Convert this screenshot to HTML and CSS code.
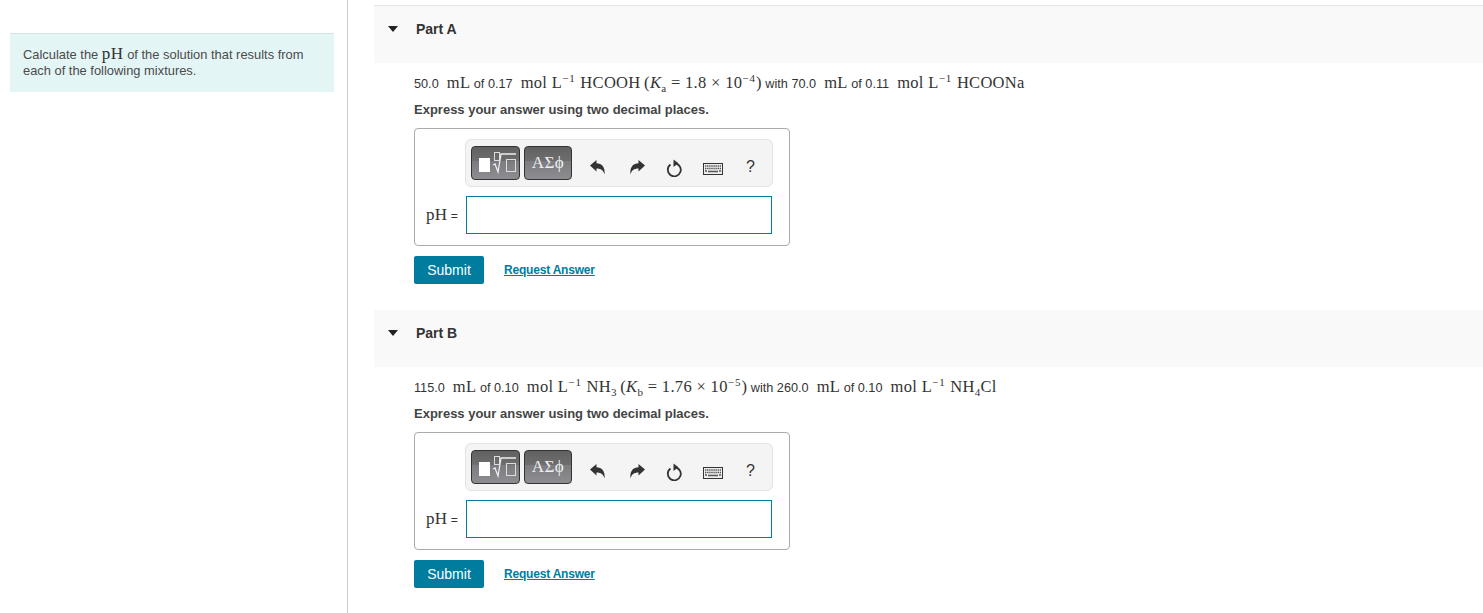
FILE: index.html
```html
<!DOCTYPE html>
<html lang="en">
<head>
    <meta charset="UTF-8">
    <title>Part A and Part B</title>
    <link rel="stylesheet" href="styles.css">
</head>
<body>
    <svg class="defs" width="0" height="0">
        <symbol id="undo" viewBox="0 0 16 16"><path d="M0 6.500 6.500 1V4.200C11.500 4.200 15.500 8 14.500 15.500 13.500 11.500 11 9.500 6.500 9.500V12.500Z"/></symbol>
        <symbol id="redo" viewBox="0 0 16 16"><path d="M16 6.500 9.500 1V4.200C4.500 4.200 .5 8 1.500 15.500 2.500 11.500 5 9.500 9.500 9.500V12.500Z"/></symbol>
        <symbol id="reset" viewBox="0 0 18 18"><path d="M5.500 5.500A6.500 6.500 0 1 0 9.500 4.300" fill="none" stroke="#333" stroke-width="1.800"/><path d="M8.500 .5 13.500 4.300 8.500 8Z"/></symbol>
        <symbol id="keys" viewBox="0 0 20 12"><rect x="0.500" y="0.500" width="19" height="11" fill="#eee" stroke="#333"/><path d="M2 3H18M2 5.500H18" stroke="#555" stroke-width="1.400" stroke-dasharray="1.400 .7"/><path d="M2 8H4M5 8.500H15M16 8H18" stroke="#555" stroke-width="1.400"/></symbol>
        <symbol id="templates" viewBox="0 0 46 32"><rect x="6" y="11" width="11" height="14" fill="#fff"/><g fill="none" stroke="#ddd"><rect x="21.500" y="5.500" width="5" height="8"/><path d="M20 18 22 17 25 25 28 7H43" stroke="#eee" stroke-width="1.300"/><rect x="33.500" y="12.500" width="9" height="12"/></g></symbol>
    </svg>

    <div class="page">
        <aside class="intro-col">
            <div class="intro">
                Calculate the <span class="m big">pH</span> of the solution that results from each of the following mixtures.
            </div>
        </aside>

        <main class="parts">
            <section class="part">
                <div class="part-head"><span class="caret"></span><span class="part-name">Part A</span></div>
                <div class="part-body">
                    <p class="question">50.0 <span class="m">&nbsp;mL</span> of 0.17 <span class="m">&nbsp;mol L<sup>&minus;1</sup> HCOOH</span> <span class="m">(<i>K</i><sub>a</sub> = 1.8 &times; 10<sup>&minus;4</sup>)</span> with 70.0 <span class="m">&nbsp;mL</span> of 0.11 <span class="m">&nbsp;mol L<sup>&minus;1</sup> HCOONa</span></p>
                    <p class="hint">Express your answer using two decimal places.</p>
                    <div class="answer">
                        <div class="toolbar">
                            <button class="tool tool-tpl"><svg width="46" height="32"><use href="#templates"/></svg></button>
                            <button class="tool tool-sym">ΑΣϕ</button>
                            <svg class="ico ico-undo" width="16" height="16"><use href="#undo"/></svg>
                            <svg class="ico ico-redo" width="16" height="16"><use href="#redo"/></svg>
                            <svg class="ico ico-reset" width="18" height="18"><use href="#reset"/></svg>
                            <svg class="ico ico-keys" width="20" height="12"><use href="#keys"/></svg>
                            <span class="help">?</span>
                        </div>
                        <div class="entry">
                            <label class="entry-label"><span class="m ph">pH</span> =</label>
                            <input class="entry-input" type="text">
                        </div>
                    </div>
                    <div class="actions">
                        <button class="submit">Submit</button>
                        <a class="request" href="#">Request Answer</a>
                    </div>
                </div>
            </section>

            <section class="part">
                <div class="part-head"><span class="caret"></span><span class="part-name">Part B</span></div>
                <div class="part-body">
                    <p class="question">115.0 <span class="m">&nbsp;mL</span> of 0.10 <span class="m">&nbsp;mol L<sup>&minus;1</sup> NH<sub>3</sub></span> <span class="m">(<i>K</i><sub>b</sub> = 1.76 &times; 10<sup>&minus;5</sup>)</span> with 260.0 <span class="m">&nbsp;mL</span> of 0.10 <span class="m">&nbsp;mol L<sup>&minus;1</sup> NH<sub>4</sub>Cl</span></p>
                    <p class="hint">Express your answer using two decimal places.</p>
                    <div class="answer">
                        <div class="toolbar">
                            <button class="tool tool-tpl"><svg width="46" height="32"><use href="#templates"/></svg></button>
                            <button class="tool tool-sym">ΑΣϕ</button>
                            <svg class="ico ico-undo" width="16" height="16"><use href="#undo"/></svg>
                            <svg class="ico ico-redo" width="16" height="16"><use href="#redo"/></svg>
                            <svg class="ico ico-reset" width="18" height="18"><use href="#reset"/></svg>
                            <svg class="ico ico-keys" width="20" height="12"><use href="#keys"/></svg>
                            <span class="help">?</span>
                        </div>
                        <div class="entry">
                            <label class="entry-label"><span class="m ph">pH</span> =</label>
                            <input class="entry-input" type="text">
                        </div>
                    </div>
                    <div class="actions">
                        <button class="submit">Submit</button>
                        <a class="request" href="#">Request Answer</a>
                    </div>
                </div>
            </section>
        </main>
    </div>
</body>
</html>
```

FILE: styles.css
```css
html, body {
    height: 100%;
}

body {
    margin: 0;
    font-family: "Liberation Sans", Arial, sans-serif;
    font-size: 12px;
    color: #333;
    background-color: #fff;
    overflow: hidden;
}

.defs {
    display: none;
}

.page {
    display: flex;
    height: 613px;
}

.intro-col {
    width: 324px;
    padding: 33px 13px 0 10px;
    border-right: 1px solid #c7ccd4;
    flex-shrink: 0;
}

.intro {
    padding: 11px 13px 14px;
    height: 33px;
    background-color: #e4f5f6;
    border-top: 1px solid #d5e3e6;
    font-size: 12.9px;
    line-height: 16px;
    color: #4a4a4a;
}

.m {
    font-family: "Liberation Serif", "Times New Roman", serif;
    font-size: 16.5px;
    letter-spacing: 0.3px;
    word-spacing: 0.1px;
    color: #333;
}

.m.big {
    font-size: 17px;
    line-height: 1;
    letter-spacing: 0.5px;
}

sup, sub {
    font-size: 11px;
    line-height: 0;
}

sup {
    letter-spacing: 1px;
}

.parts {
    flex: 1;
    padding: 5px 0 0 26px;
}

.part {
    margin-bottom: 26px;
}

.part-head {
    display: flex;
    align-items: center;
    height: 57px;
    padding-bottom: 11px;
    box-sizing: border-box;
    background-color: #f9f9f9;
}

.part:first-child .part-head {
    height: 58px;
    border-top: 1px solid #e5e5e5;
}

.caret {
    width: 0;
    height: 0;
    margin: 0 18px 0 14px;
    border-left: 5px solid transparent;
    border-right: 5px solid transparent;
    border-top: 6px solid #222;
}

.part-name {
    font-size: 14px;
    font-weight: bold;
    color: #333;
}

.part-body {
    padding: 11px 0 0 40px;
}

.question {
    margin: 0;
    height: 18px;
    line-height: 18px;
    font-size: 12.7px;
    white-space: nowrap;
}

.hint {
    margin: 9px 0 0;
    height: 18px;
    line-height: 18px;
    font-size: 13px;
    font-weight: bold;
    color: #444;
}

.answer {
    width: 374px;
    height: 116px;
    margin-top: 9px;
    border: 1px solid #aaa;
    border-radius: 4px;
}

.toolbar {
    display: flex;
    align-items: center;
    width: 306px;
    height: 46px;
    margin: 10px 0 0 50px;
    border: 1px solid #e3e3e3;
    border-radius: 6px;
    background-color: #f4f4f4;
}

.tool {
    height: 34px;
    padding: 0;
    border: 1px solid #333;
    border-radius: 4px;
    background: linear-gradient(#616161 0, #6e6e6e 43%, #7b7b80 43%, #8c8c91 100%);
    color: #f0f0f0;
    font-family: "Liberation Serif", serif;
    font-size: 17px;
    letter-spacing: 0.5px;
}

.tool-tpl {
    width: 49px;
    margin-left: 5px;
}

.tool-tpl svg {
    display: block;
    margin: 0 auto;
}

.tool-sym {
    width: 48px;
    margin-left: 4px;
}

.ico {
    fill: #333;
    flex-shrink: 0;
}

.ico-undo {
    margin: 7px 0 0 18px;
}

.ico-redo {
    margin: 7px 0 0 23px;
}

.ico-reset {
    margin: 9px 0 0 20px;
}

.ico-keys {
    margin: 12px 0 0 20px;
}

.help {
    margin: 8px 0 0 23px;
    font-size: 16px;
    color: #333;
}

.entry {
    display: flex;
    align-items: center;
    margin-top: 9px;
}

.entry-label {
    width: 51px;
    padding-left: 11px;
    box-sizing: border-box;
    font-size: 12px;
    white-space: nowrap;
}

.ph {
    font-size: 17px;
}

.entry-input {
    width: 306px;
    height: 38px;
    padding: 0;
    box-sizing: border-box;
    border: 1px solid #007c9e;
    background-color: #fff;
}

.actions {
    display: flex;
    align-items: center;
    margin-top: 10px;
}

.submit {
    width: 70px;
    height: 28px;
    padding: 0;
    border: none;
    border-radius: 2px;
    background-color: #007c9e;
    color: #fff;
    font-family: inherit;
    font-size: 14px;
}

.request {
    margin-left: 20px;
    color: #007c9e;
    font-size: 12px;
    font-weight: bold;
    letter-spacing: -0.2px;
}
```
